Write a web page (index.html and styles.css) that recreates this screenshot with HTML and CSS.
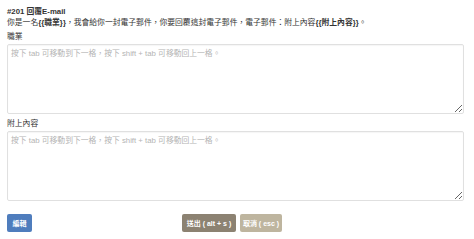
FILE: index.html
```html
<!DOCTYPE html>
<html lang="zh-Hant">
<head>
  <meta charset="UTF-8">
  <title>#201 回覆E-mail</title>
  <link rel="stylesheet" href="styles.css">
</head>
<body>
  <div class="prompt-box">
    <div class="title">#201 回覆E-mail</div>
    <div class="desc">你是一名<b>{{職業}}</b>，我會給你一封電子郵件，你要回覆這封電子郵件，電子郵件：附上內容<b>{{附上內容}}</b>。</div>

    <div class="field">
      <label for="job">職業</label>
      <textarea id="job" placeholder="按下 tab 可移動到下一格，按下 shift + tab 可移動回上一格。"></textarea>
    </div>

    <div class="field">
      <label for="content">附上內容</label>
      <textarea id="content" placeholder="按下 tab 可移動到下一格，按下 shift + tab 可移動回上一格。"></textarea>
    </div>

    <div class="actions">
      <button class="edit-btn">編輯</button>
      <div class="main-btns">
        <button class="send-btn">送出 ( alt + s )</button>
        <button class="cancel-btn">取消 ( esc )</button>
      </div>
      <div></div>
    </div>
  </div>
</body>
</html>
```

FILE: styles.css
```css
* {
  box-sizing: border-box;
  margin: 0;
  padding: 0;
}

body {
  font-family: 'Liberation Sans', 'Noto Sans CJK TC', sans-serif;
  font-size: 7.8px;
  line-height: 11px;
  color: #333;
  background: white;
}

.prompt-box {
  padding: 6px 10px 0 7px;
}

.title {
  font-weight: bold;
}

.desc b {
  font-weight: bold;
}

.field {
  margin-top: 3px;
}

.field + .field {
  margin-top: 4px;
}

.field label {
  display: block;
  margin-bottom: 2px;
}

.field textarea {
  display: block;
  width: 100%;
  height: 70px;
  padding: 3px 3px;
  border: 1px solid #e0e0e0;
  border-radius: 2px;
  font-family: 'Liberation Sans', 'Noto Sans CJK TC', sans-serif;
  font-size: 7.8px;
  line-height: 11px;
  color: #333;
  box-shadow: inset 0 1px 1px rgba(0, 0, 0, 0.04);
}

.field textarea::placeholder {
  color: #b4b4b4;
}

.actions {
  display: grid;
  grid-template-columns: 1fr auto 1fr;
  align-items: center;
  margin-top: 13px;
}

.main-btns {
  display: flex;
  gap: 4px;
  margin-right: 7px;
}

button {
  height: 18px;
  padding: 0;
  border: none;
  border-radius: 2px;
  font-family: 'Liberation Sans', 'Noto Sans CJK TC', sans-serif;
  font-size: 7px;
  font-weight: bold;
  color: white;
  cursor: pointer;
}

.edit-btn {
  justify-self: start;
  width: 25px;
  background: #4f7dbd;
}

.send-btn {
  width: 54px;
  background: #8c8272;
}

.cancel-btn {
  width: 42px;
  background: #beb59f;
}
```
